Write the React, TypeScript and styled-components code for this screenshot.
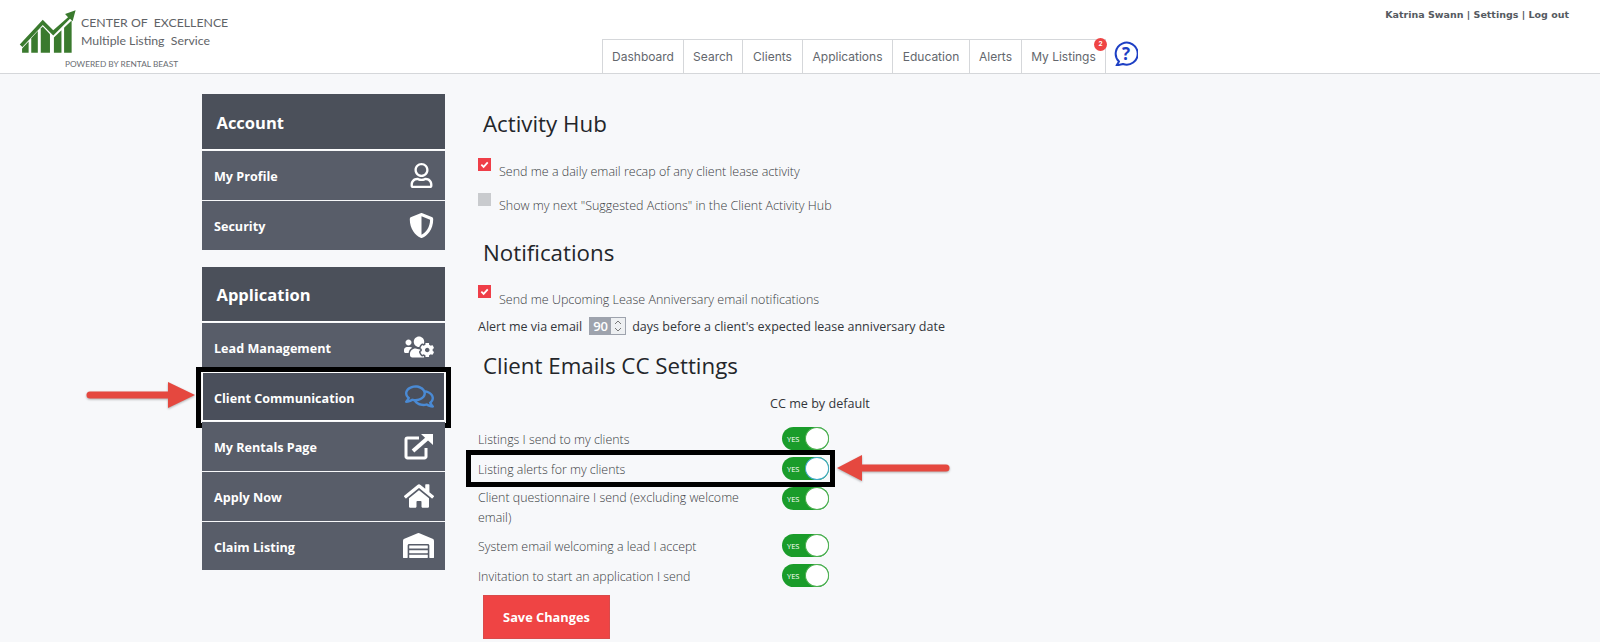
import React from "react";
import styled, { createGlobalStyle } from "styled-components";
import {
  FaRegUser,
  FaShieldAlt,
  FaUsersCog,
  FaRegComments,
  FaHome,
  FaWarehouse,
} from "react-icons/fa";

const GlobalStyle = createGlobalStyle`
  html, body {
    margin: 0;
    padding: 0;
    background: #f7f8fa;
    font-family: "Open Sans", "Noto Sans", sans-serif;
  }
  * {
    box-sizing: border-box;
  }
`;

const Header = styled.header`
  display: flex;
  height: 74px;
  background: #fff;
  border-bottom: 1px solid #d5d7da;
`;

const Brand = styled.div`
  position: relative;
  width: 602px;
  flex: none;
  display: grid;
  grid-template-columns: 62px auto;
  grid-template-rows: 54px auto;
  padding: 10px 0 0 19px;
`;

const BrandLines = styled.div`
  display: flex;
  flex-direction: column;
  font-family: Lato, sans-serif;
  font-size: 12.3px;
  color: #5f6367;
  line-height: 18px;
  padding-top: 4px;
`;

const BrandLine = styled.span`
  white-space: pre;
`;

const PoweredBy = styled.div`
  grid-column: 1 / 3;
  font-family: Lato, sans-serif;
  font-size: 8.3px;
  line-height: 10px;
  color: #6a6e73;
  padding-left: 46px;
  margin-top: -5px;
`;

const Tabs = styled.nav`
  display: flex;
  align-self: flex-end;
  height: 34px;
  border-right: 1px solid #d5d7da;
`;

const Tab = styled.a<{ $width: number }>`
  position: relative;
  width: ${(p) => p.$width}px;
  display: flex;
  align-items: center;
  justify-content: center;
  font-family: Inter, sans-serif;
  font-size: 12px;
  color: #63676d;
  border: 1px solid #d5d7da;
  border-right: none;
  border-bottom: none;
`;

const Badge = styled.span`
  position: absolute;
  top: -2px;
  right: -2px;
  width: 13px;
  height: 13px;
  border-radius: 50%;
  background: #ef4444;
  color: #fff;
  font-size: 6.5px;
  font-weight: 700;
  line-height: 13px;
  text-align: center;
`;

const HelpIcon = styled.svg`
  align-self: flex-end;
  width: 25px;
  height: 25px;
  margin: 0 0 7px 7px;
`;

const UserLinks = styled.div`
  margin-left: auto;
  padding: 9px 31px 0 0;
  font-family: "DejaVu Sans", sans-serif;
  font-size: 9.5px;
  font-weight: 700;
  line-height: 12px;
  color: #555a61;
  white-space: pre;
`;

const Page = styled.div`
  display: flex;
  padding-left: 202px;
`;

const Sidebar = styled.aside`
  width: 243px;
  flex: none;
  padding-top: 20px;
`;

const SideGroup = styled.div`
  display: flex;
  flex-direction: column;
  gap: 1px;
  margin-bottom: 17px;
`;

const SideHeader = styled.div<{ $height: number }>`
  height: ${(p) => p.$height}px;
  padding: 2px 0 0 14.5px;
  display: flex;
  align-items: center;
  background: #4b505a;
  color: #fff;
  font-size: 16.5px;
  font-weight: 700;
  border-bottom: 1px solid #fff;
`;

const SideItem = styled.a<{ $active?: boolean }>`
  position: relative;
  height: 48.75px;
  display: flex;
  align-items: center;
  justify-content: space-between;
  padding: 0 11px 0 12px;
  background: ${(p) => (p.$active ? "#4a4f5b" : "#585d69")};
  color: #fff;
  font-size: 12.6px;
  font-weight: 700;

  ${(p) =>
    p.$active &&
    `
    outline: 1px solid #fff;
    outline-offset: -1px;
    &::after {
      content: "";
      position: absolute;
      inset: -5px -6px -7px -6px;
      border: 5px solid #000;
    }
  `}
`;

const SideLabel = styled.span`
  padding-top: 3px;
`;

const SideIcon = styled.span<{ $color?: string }>`
  display: flex;
  width: 32px;
  justify-content: flex-end;
  color: ${(p) => p.$color || "#fff"};
`;

const LeftArrow = styled.svg`
  position: absolute;
  left: -116px;
  top: 9px;
  width: 110px;
  height: 28px;
  z-index: 2;
  filter: drop-shadow(0 1px 1px rgba(0, 0, 0, 0.3));
`;

const Main = styled.main`
  margin-left: 33px;
  width: 480px;
  display: flex;
  flex-direction: column;
`;

const Heading = styled.h2<{ $top: number }>`
  margin: ${(p) => p.$top}px 0 0 5px;
  height: 36px;
  font-size: 22.3px;
  font-weight: 400;
  line-height: 36px;
  color: #23262a;
`;

const CheckRow = styled.div<{ $top: number; $height: number }>`
  display: flex;
  gap: 8px;
  margin-top: ${(p) => p.$top}px;
  height: ${(p) => p.$height}px;
`;

const Box = styled.span<{ $on?: boolean }>`
  flex: none;
  width: 13px;
  height: 13px;
  background: ${(p) => (p.$on ? "#ef3e48" : "#c9cbce")};
  display: flex;
  align-items: center;
  justify-content: center;
`;

const CheckLabel = styled.span<{ $shift?: number }>`
  margin-top: ${(p) => p.$shift || 0}px;
  font-size: 12.5px;
  font-weight: 300;
  line-height: 28px;
  color: #3a3d42;
  white-space: nowrap;
`;

const AlertRow = styled.div`
  display: flex;
  align-items: center;
  height: 18px;
  margin-top: 2px;
  font-size: 12.5px;
  color: #33363b;
  white-space: nowrap;
`;

const DaysInput = styled.span`
  display: flex;
  width: 37px;
  height: 18px;
  margin: 0 6px 0 7px;
  background: #9ea3ad;
  color: #fff;
  font-size: 13px;
  font-weight: 600;
  line-height: 18px;
  padding-left: 4px;
  justify-content: space-between;
`;

const Spinner = styled.svg`
  width: 16px;
  height: 18px;
  background: #eef0f2;
  border: 1px solid #9ea3ad;
`;

const CcTitle = styled.div`
  margin: 10px 0 13px 292px;
  height: 20px;
  font-size: 12.6px;
  line-height: 20px;
  color: #33363b;
  white-space: nowrap;
`;

const ToggleRow = styled.div<{ $focus?: boolean }>`
  position: relative;
  display: flex;
  align-items: flex-start;
  justify-content: space-between;
  width: 351px;
  margin-bottom: 7px;

  ${(p) =>
    p.$focus &&
    `
    &::after {
      content: "";
      position: absolute;
      inset: -7px -6px -7px -12px;
      border: 5px solid #000;
    }
  `}
`;

const RowLabel = styled.span<{ $wrap?: boolean }>`
  width: 275px;
  margin: ${(p) => (p.$wrap ? "1px 0 -1px" : "3px 0 0")};
  font-size: 12.4px;
  font-weight: 300;
  line-height: 20px;
  color: #3a3d42;
`;

const Toggle = styled.span`
  flex: none;
  width: 47px;
  height: 23px;
  border-radius: 12px;
  background: #1a9c2a;
  display: flex;
  align-items: center;
  justify-content: space-between;
  padding-left: 5px;
  color: #fff;
  font-size: 7.5px;
  font-weight: 400;
`;

const Knob = styled.span<{ $focus?: boolean }>`
  width: 24px;
  height: 23px;
  border-radius: 50%;
  background: #fff;
  border: 1px solid ${(p) => (p.$focus ? "#3fa9c9" : "#4caf50")};
`;

const SaveButton = styled.button`
  width: 127px;
  height: 44px;
  margin: 1px 0 0 5px;
  background: #ef4444;
  border: 1px solid #d94a4a;
  color: #fff;
  font-family: inherit;
  font-size: 12.8px;
  font-weight: 700;
`;

const RightArrow = styled.svg`
  position: absolute;
  left: 358px;
  top: -3px;
  width: 114px;
  height: 28px;
  z-index: 2;
  filter: drop-shadow(0 1px 1px rgba(0, 0, 0, 0.3));
`;

const Check = () => (
  <svg width="9" height="9" viewBox="0 0 10 10">
    <path d="M1.5 5.2 4 7.6 8.6 2.6" fill="none" stroke="#fff" strokeWidth="2" />
  </svg>
);

const LogoMark = () => (
  <svg width="58" height="44" viewBox="58 28 172 134">
    <g fill="#3a7a2e">
      <path d="M65 158V145L85 124V158Z" />
      <path d="M93 158V114L113 92V158Z" />
      <path d="M122 158V84L128 78 150 102V158Z" />
      <path d="M162 158V112L185 90V158Z" />
      <path d="M193 158V82L216 60V158Z" />
      <path d="M205 50 196 40 228 29 219 62 211 55 160 106 128 74 66 141 58 133 128 58 160 90Z" />
    </g>
  </svg>
);

const ExternalIcon = () => (
  <svg width="30" height="27" viewBox="0 0 30 27" fill="none" stroke="#fff">
    <path d="M15 5H3.5a1.5 1.5 0 0 0-1.5 1.5v17A1.5 1.5 0 0 0 3.5 25h17a1.5 1.5 0 0 0 1.5-1.5V15" strokeWidth="3" />
    <path d="M9 18 25 4" strokeWidth="4" />
    <path d="M17 1H29V12Z" fill="#fff" stroke="none" />
  </svg>
);

const accountItems = [
  { label: "My Profile", icon: <FaRegUser size={25} /> },
  { label: "Security", icon: <FaShieldAlt size={25} /> },
];

const applicationItems = [
  { label: "Lead Management", icon: <FaUsersCog size={30} /> },
  { label: "Client Communication", icon: <FaRegComments size={29} />, active: true },
  { label: "My Rentals Page", icon: <ExternalIcon /> },
  { label: "Apply Now", icon: <FaHome size={30} /> },
  { label: "Claim Listing", icon: <FaWarehouse size={31} /> },
];

const tabs = [
  { label: "Dashboard", width: 81 },
  { label: "Search", width: 59 },
  { label: "Clients", width: 60 },
  { label: "Applications", width: 90 },
  { label: "Education", width: 77 },
  { label: "Alerts", width: 52 },
  { label: "My Listings", width: 84, badge: "2" },
];

const ccRows = [
  { label: "Listings I send to my clients" },
  { label: "Listing alerts for my clients", focus: true },
  { label: "Client questionnaire I send (excluding welcome email)", wrap: true },
  { label: "System email welcoming a lead I accept" },
  { label: "Invitation to start an application I send" },
];

export default function App() {
  return (
    <>
      <GlobalStyle />
      <Header>
        <Brand>
          <LogoMark />
          <BrandLines>
            <BrandLine>CENTER OF  EXCELLENCE</BrandLine>
            <BrandLine>Multiple Listing  Service</BrandLine>
          </BrandLines>
          <PoweredBy>POWERED BY RENTAL BEAST</PoweredBy>
        </Brand>
        <Tabs>
          {tabs.map((t) => (
            <Tab key={t.label} $width={t.width}>
              {t.label}
              {t.badge && <Badge>{t.badge}</Badge>}
            </Tab>
          ))}
        </Tabs>
        <HelpIcon viewBox="0 0 25 25">
          <path
            d="M6 20.5 A11 11 0 1 1 10 23 L3.5 24.5 Z"
            fill="none"
            stroke="#1d3fc4"
            strokeWidth="2"
            strokeLinejoin="round"
          />
          <text x="13" y="19" textAnchor="middle" fontSize="17" fontWeight="700" fill="#1d3fc4" fontFamily="Open Sans">
            ?
          </text>
        </HelpIcon>
        <UserLinks>Katrina Swann | Settings | Log out</UserLinks>
      </Header>
      <Page>
        <Sidebar>
          <SideGroup>
            <SideHeader $height={56}>Account</SideHeader>
            {accountItems.map((item) => (
              <SideItem key={item.label}>
                <SideLabel>{item.label}</SideLabel>
                <SideIcon>{item.icon}</SideIcon>
              </SideItem>
            ))}
          </SideGroup>
          <SideGroup>
            <SideHeader $height={55}>Application</SideHeader>
            {applicationItems.map((item) => (
              <SideItem key={item.label} $active={item.active}>
                <SideLabel>{item.label}</SideLabel>
                <SideIcon $color={item.active ? "#4a8ad4" : undefined}>{item.icon}</SideIcon>
                {item.active && (
                  <LeftArrow viewBox="0 0 110 28">
                    <path d="M4 14H84" stroke="#e5483f" strokeWidth="7" strokeLinecap="round" />
                    <path d="M82 1 109 14 82 27Z" fill="#e5483f" />
                  </LeftArrow>
                )}
              </SideItem>
            ))}
          </SideGroup>
        </Sidebar>
        <Main>
          <Heading $top={32}>Activity Hub</Heading>
          <CheckRow $top={16} $height={35}>
            <Box $on>
              <Check />
            </Box>
            <CheckLabel>Send me a daily email recap of any client lease activity</CheckLabel>
          </CheckRow>
          <CheckRow $top={0} $height={35}>
            <Box />
            <CheckLabel $shift={-1}>Show my next "Suggested Actions" in the Client Activity Hub</CheckLabel>
          </CheckRow>
          <Heading $top={7}>Notifications</Heading>
          <CheckRow $top={14} $height={30}>
            <Box $on>
              <Check />
            </Box>
            <CheckLabel $shift={1}>Send me Upcoming Lease Anniversary email notifications</CheckLabel>
          </CheckRow>
          <AlertRow>
            Alert me via email
            <DaysInput>
              90
              <Spinner viewBox="0 0 14 16">
                <path d="M4 6 7 3 10 6M4 10 7 13 10 10" fill="none" stroke="#777" />
              </Spinner>
            </DaysInput>
            days before a client's expected lease anniversary date
          </AlertRow>
          <Heading $top={13}>Client Emails CC Settings</Heading>
          <CcTitle>CC me by default</CcTitle>
          {ccRows.map((row) => (
            <ToggleRow key={row.label} $focus={row.focus}>
              <RowLabel $wrap={row.wrap}>{row.label}</RowLabel>
              <Toggle>
                YES
                <Knob $focus={row.focus} />
              </Toggle>
              {row.focus && (
                <RightArrow viewBox="0 0 114 28">
                  <path d="M24 14H110" stroke="#e5483f" strokeWidth="7" strokeLinecap="round" />
                  <path d="M1 14 26 1V27Z" fill="#e5483f" />
                </RightArrow>
              )}
            </ToggleRow>
          ))}
          <SaveButton>Save Changes</SaveButton>
        </Main>
      </Page>
    </>
  );
}
